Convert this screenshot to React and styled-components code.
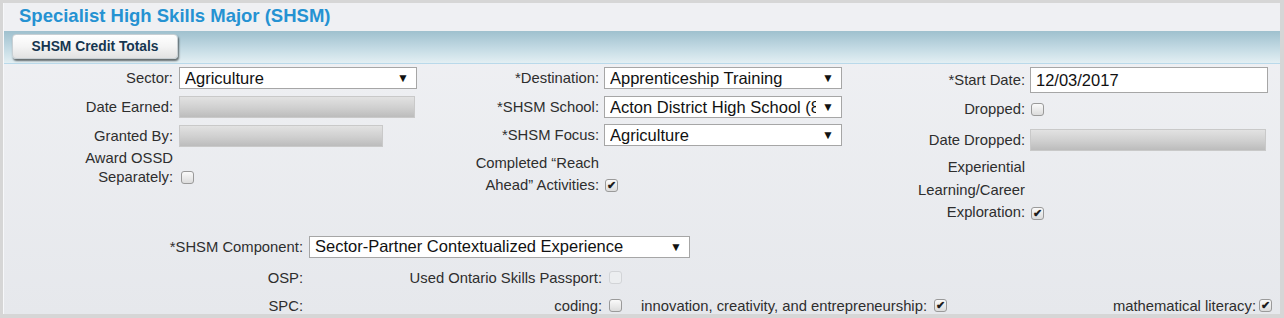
import React from "react";
import styled, { createGlobalStyle } from "styled-components";

const GlobalStyle = createGlobalStyle`
  html, body {
    margin: 0;
    padding: 0;
    background: #d6d6d6;
  }
  body {
    font-family: Arial, "Liberation Sans", Helvetica, sans-serif;
  }
`;

const Frame = styled.div`
  box-sizing: border-box;
  width: 1284px;
  height: 318px;
  border: 3px solid #d6d6d6;
  border-bottom-width: 4px;
  border-right-width: 4px;
  overflow: hidden;
`;

const Panel = styled.div`
  height: 100%;
  background: linear-gradient(to bottom, #f0f1f4 0%, #e6e8ec 100%);
  border-left: 1px solid #f7f8fa;
  overflow: hidden;
`;

const Title = styled.h1`
  margin: 0;
  height: 26px;
  padding: 2px 0 0 15px;
  font-size: 18.5px;
  font-weight: bold;
  color: #2592d2;
  line-height: 22px;
  background: #eff0f3;
`;

const TabBar = styled.div`
  height: 33px;
  display: flex;
  align-items: flex-start;
  padding: 3px 0 0 8px;
  box-sizing: border-box;
  background: linear-gradient(to bottom, #9fc0ce 0%, #c4dbe4 55%, #e3eff3 100%);
  border-bottom: 1px solid #b9d9ea;
`;

const TabButton = styled.button`
  width: 166px;
  height: 25px;
  padding: 0;
  border: 1px solid #c8cfd3;
  border-radius: 4px;
  background: linear-gradient(to bottom, #ffffff 0%, #f4f4f4 50%, #e2e2e2 100%);
  box-shadow: 1px 2px 2px rgba(0, 0, 0, 0.55);
  font-family: Arial, "Liberation Sans", sans-serif;
  font-size: 13.8px;
  font-weight: bold;
  color: #163650;
  cursor: pointer;
`;

const TopGrid = styled.div`
  display: grid;
  grid-template-columns: 426px 426px 426px;
`;

const Column = styled.div`
  display: flex;
  flex-direction: column;
`;

const Row = styled.div`
  display: flex;
  align-items: ${({ $bottom }) => ($bottom ? "flex-end" : "center")};
  margin-top: ${({ $mt }) => $mt || 0}px;
  height: ${({ $h }) => ($h ? `${$h}px` : "auto")};
`;

const Label = styled.div`
  flex: 0 0 ${({ $w }) => $w || 169}px;
  text-align: right;
  font-size: 14.8px;
  color: #2e2e2e;
  line-height: ${({ $lh }) => $lh || 18}px;
  box-sizing: border-box;
  white-space: nowrap;
`;

const Select = styled.div`
  box-sizing: border-box;
  width: ${({ $w }) => $w || 238}px;
  height: ${({ $h }) => $h || 22}px;
  margin-left: ${({ $ml }) => ($ml === undefined ? 6 : $ml)}px;
  border: 1px solid #a6a6a6;
  background: #fff;
  display: flex;
  align-items: center;
  padding: 0 7px 0 5px;
  font-size: 16.5px;
  color: #111;
  overflow: hidden;
`;

const SelectText = styled.span`
  flex: 1;
  min-width: 0;
  overflow: hidden;
  white-space: nowrap;
`;

const Arrow = styled.span`
  flex: 0 0 auto;
  font-size: 12px;
  color: #111;
  margin-left: 6px;
`;

const TextInput = styled.div`
  box-sizing: border-box;
  width: ${({ $w }) => $w || 238}px;
  height: ${({ $h }) => $h || 22}px;
  margin-left: ${({ $ml }) => ($ml === undefined ? 6 : $ml)}px;
  border: 1px solid ${({ $disabled }) => ($disabled ? "#c9c9c9" : "#a6a6a6")};
  background: ${({ $disabled }) =>
    $disabled ? "linear-gradient(to bottom, #e2e2e2 0%, #cfcfcf 55%, #bcbcbc 100%)" : "#fff"};
  display: flex;
  align-items: center;
  padding-left: 5px;
  font-size: 16.5px;
  color: #111;
`;

const Check = styled.span`
  box-sizing: border-box;
  flex: 0 0 13px;
  width: 13px;
  height: 13px;
  margin-left: ${({ $ml }) => ($ml === undefined ? 8 : $ml)}px;
  margin-bottom: ${({ $mb }) => $mb || 0}px;
  border: 1px solid ${({ $disabled }) => ($disabled ? "#d2d4d7" : "#9a9a9a")};
  border-radius: 3px;
  background: ${({ $disabled }) =>
    $disabled ? "#eceef0" : "linear-gradient(to bottom, #fafafa 0%, #dcdcdc 100%)"};
  display: inline-flex;
  align-items: center;
  justify-content: center;
  font-size: 11px;
  font-weight: bold;
  line-height: 1;
  color: #1e1e1e;
`;

const BottomRow = styled.div`
  display: flex;
  align-items: center;
  height: 22px;
  margin-top: ${({ $mt }) => $mt || 0}px;
`;

const Pair = styled.div`
  flex: 0 0 ${({ $w }) => $w}px;
  display: flex;
  justify-content: flex-end;
  align-items: center;
  font-size: 14.8px;
  color: #2e2e2e;
  white-space: nowrap;
`;

const Drop = ({ value, w, ml }) => (
  <Select $w={w} $ml={ml}>
    <SelectText>{value}</SelectText>
    <Arrow>▼</Arrow>
  </Select>
);

const Box = ({ checked, disabled, ml, mb }) => (
  <Check $disabled={disabled} $ml={ml} $mb={mb}>
    {checked ? "✔" : ""}
  </Check>
);

export default function App() {
  return (
    <>
      <GlobalStyle />
      <Frame>
        <Panel>
          <Title>Specialist High Skills Major (SHSM)</Title>
          <TabBar>
            <TabButton>SHSM Credit Totals</TabButton>
          </TabBar>

          <TopGrid>
            <Column>
              <Row $mt={3} $h={22}>
                <Label>Sector:</Label>
                <Drop value="Agriculture" />
              </Row>
              <Row $mt={7} $h={22}>
                <Label>Date Earned:</Label>
                <TextInput $disabled $w={236} />
              </Row>
              <Row $mt={6} $h={23}>
                <Label>Granted By:</Label>
                <TextInput $disabled $w={204} />
              </Row>
              <Row $mt={2} $bottom>
                <Label $lh={19}>
                  Award OSSD
                  <br />
                  Separately:
                </Label>
                <Box ml={8} mb={3} />
              </Row>
            </Column>

            <Column>
              <Row $mt={3} $h={22}>
                <Label>*Destination:</Label>
                <Drop value="Apprenticeship Training" ml={5} />
              </Row>
              <Row $mt={7} $h={22}>
                <Label>*SHSM School:</Label>
                <Drop value="Acton District High School (851)" ml={5} />
              </Row>
              <Row $mt={6} $h={22}>
                <Label>*SHSM Focus:</Label>
                <Drop value="Agriculture" ml={5} />
              </Row>
              <Row $mt={6} $bottom>
                <Label $lh={22}>
                  Completed “Reach
                  <br />
                  Ahead” Activities:
                </Label>
                <Box checked ml={6} mb={4} />
              </Row>
            </Column>

            <Column>
              <Row $mt={3} $h={26}>
                <Label>*Start Date:</Label>
                <TextInput $h={26} $ml={5}>
                  12/03/2017
                </TextInput>
              </Row>
              <Row $mt={5} $h={22}>
                <Label>Dropped:</Label>
                <Box ml={6} />
              </Row>
              <Row $mt={8} $h={23}>
                <Label>Date Dropped:</Label>
                <TextInput $disabled $w={236} $ml={5} />
              </Row>
              <Row $mt={5} $bottom>
                <Label $lh={22.5}>
                  Experiential
                  <br />
                  Learning/Career
                  <br />
                  Exploration:
                </Label>
                <Box checked ml={6} mb={4} />
              </Row>
            </Column>
          </TopGrid>

          <BottomRow $mt={12}>
            <Label $w={299}>*SHSM Component:</Label>
            <Drop value="Sector-Partner Contextualized Experience" w={381} ml={6} />
          </BottomRow>
          <BottomRow $mt={9}>
            <Label $w={299}>OSP:</Label>
            <Pair $w={319}>
              Used Ontario Skills Passport:
              <Box disabled ml={7} />
            </Pair>
          </BottomRow>
          <BottomRow $mt={6}>
            <Label $w={299}>SPC:</Label>
            <Pair $w={319}>
              coding:
              <Box ml={7} />
            </Pair>
            <Pair $w={325}>
              innovation, creativity, and entrepreneurship:
              <Box checked ml={7} />
            </Pair>
            <Pair $w={325}>
              mathematical literacy:
              <Box checked ml={3} />
            </Pair>
          </BottomRow>
        </Panel>
      </Frame>
    </>
  );
}
